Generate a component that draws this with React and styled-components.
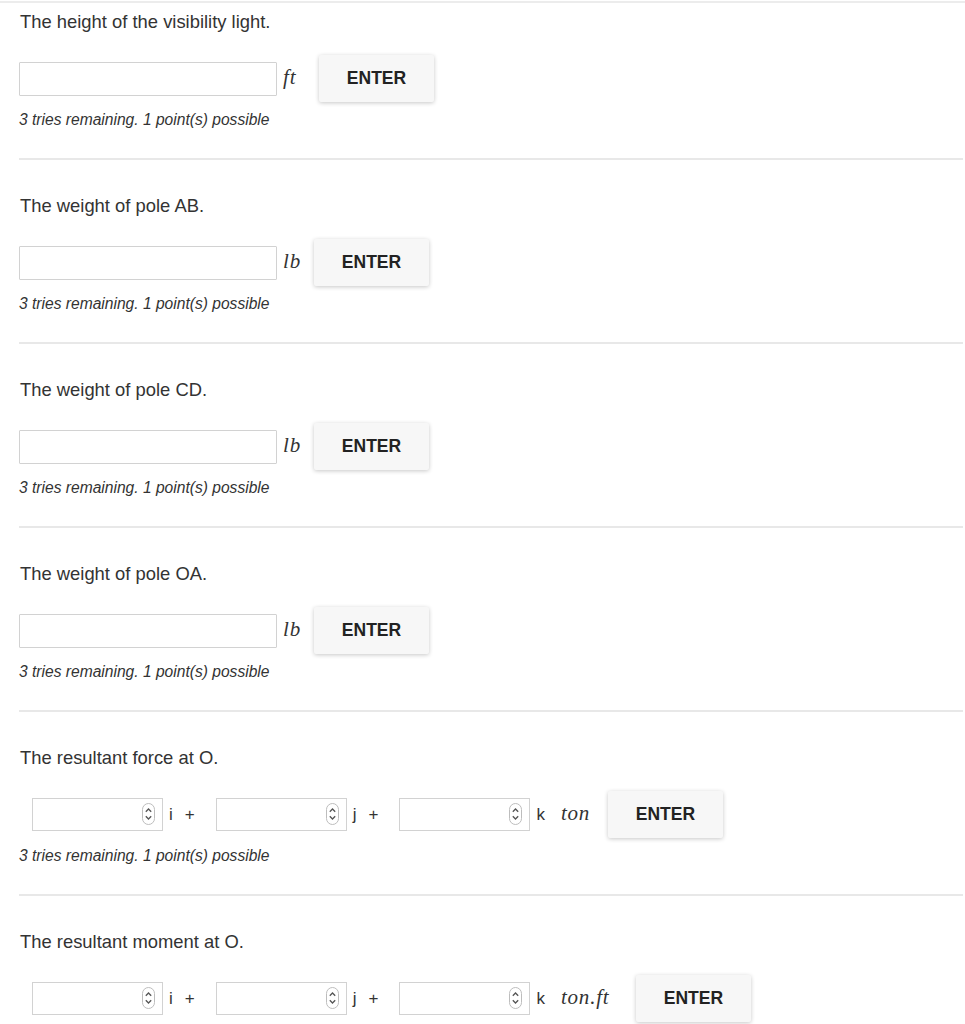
import React from 'react';
import styled, { createGlobalStyle } from 'styled-components';

const GlobalStyle = createGlobalStyle`
  body {
    margin: 0;
    background: #fff;
    font-family: "Liberation Sans", Arial, sans-serif;
    color: #333;
  }
`;

// unitWidth mirrors the space the typeset unit takes in the original page
const questions = [
    { prompt: 'The height of the visibility light.', unit: 'ft', unitWidth: 20 },
    { prompt: 'The weight of pole AB.', unit: 'lb', unitWidth: 15 },
    { prompt: 'The weight of pole CD.', unit: 'lb', unitWidth: 15 },
    { prompt: 'The weight of pole OA.', unit: 'lb', unitWidth: 15 },
    { prompt: 'The resultant force at O.', unit: 'ton', unitWidth: 31, vector: true },
    { prompt: 'The resultant moment at O.', unit: 'ton.ft', unitWidth: 59, vector: true },
];

const Spinner = () => (
    <SpinBox>
        <svg width="13" height="22" viewBox="0 0 13 22">
            <rect x="0.5" y="0.5" width="12" height="21" rx="6" fill="#fff" stroke="#bdbdbd"/>
            <path d="M3.8 8.8 L6.5 6 L9.2 8.8" fill="none" stroke="#555" strokeWidth="1.3"/>
            <path d="M3.8 13.2 L6.5 16 L9.2 13.2" fill="none" stroke="#555" strokeWidth="1.3"/>
        </svg>
    </SpinBox>
);

const VectorPart = ({ axis, last }) => (
    <Part>
        <NumberWrap>
            <NumberField type="text"/>
            <Spinner/>
        </NumberWrap>
        <Axis>{axis}</Axis>
        {!last && <Plus>+</Plus>}
    </Part>
);

const App = () => {
    return (
        <Page>
            <GlobalStyle/>
            {questions.map((q, i) => (
                <Section key={i} $first={i === 0}>
                    <Prompt>{q.prompt}</Prompt>
                    <AnswerRow $vector={q.vector}>
                        {q.vector ? (
                            <>
                                <VectorPart axis="i"/>
                                <VectorPart axis="j"/>
                                <VectorPart axis="k" last/>
                                <Unit $wide $w={q.unitWidth}>{q.unit}</Unit>
                            </>
                        ) : (
                            <>
                                <TextBox type="text"/>
                                <Unit $w={q.unitWidth}>{q.unit}</Unit>
                            </>
                        )}
                        <EnterButton>ENTER</EnterButton>
                    </AnswerRow>
                    <Status>3 tries remaining. 1 point(s) possible</Status>
                </Section>
            ))}
        </Page>
    );
};

export default App;


const Page = styled.div`
  border-top: 2px solid #ececec;
  margin-top: 1px;
`

const Section = styled.section`
  margin: 0 2px 0 19px;
  padding: ${p => p.$first ? '7px' : '34px'} 0 28px 0;
  border-bottom: 2px solid #e8e8e8;
`

const Prompt = styled.div`
  font-size: 18.4px;
  line-height: 24px;
  padding-left: 1px;
`

const AnswerRow = styled.div`
  display: flex;
  align-items: center;
  height: 47px;
  margin-top: 21px;
  padding-left: ${p => p.$vector ? '13px' : '0'};
`

const TextBox = styled.input`
  box-sizing: border-box;
  width: 258px;
  height: 34px;
  border: 1px solid #d2d2d2;
  border-radius: 1px;
  background: #fff;
  margin: 0;
  outline: none;
`

const Unit = styled.span`
  display: inline-block;
  width: ${p => p.$w}px;
  white-space: nowrap;
  font-family: "Liberation Serif", "Times New Roman", serif;
  font-style: italic;
  font-size: 21px;
  margin-left: ${p => p.$wide ? '16px' : '6px'};
  margin-top: -2px;
  letter-spacing: 0.8px;
`

const EnterButton = styled.button`
  flex: none;
  width: 115px;
  height: 47px;
  margin-left: 16px;
  border: none;
  border-radius: 2px;
  background: #f7f7f7;
  box-shadow: 0 1px 4px rgba(0, 0, 0, 0.22);
  font-family: "Liberation Sans", Arial, sans-serif;
  font-size: 17.5px;
  font-weight: 700;
  color: #222;
  padding: 0;
`

const Status = styled.div`
  margin-top: 8px;
  font-size: 15.6px;
  font-style: italic;
  line-height: 20px;
`

const Part = styled.div`
  display: flex;
  align-items: center;
`

const NumberWrap = styled.div`
  position: relative;
  width: 131px;
  height: 33px;
`

const NumberField = styled.input`
  box-sizing: border-box;
  width: 100%;
  height: 100%;
  border: 1px solid #d2d2d2;
  background: #fff;
  margin: 0;
  outline: none;
`

const SpinBox = styled.div`
  position: absolute;
  right: 8px;
  top: 5px;
  height: 22px;
  display: flex;
`

const Axis = styled.span`
  font-size: 17px;
  margin-left: 6px;
`

const Plus = styled.span`
  font-size: 17px;
  margin: 0 21px 0 12px;
`
